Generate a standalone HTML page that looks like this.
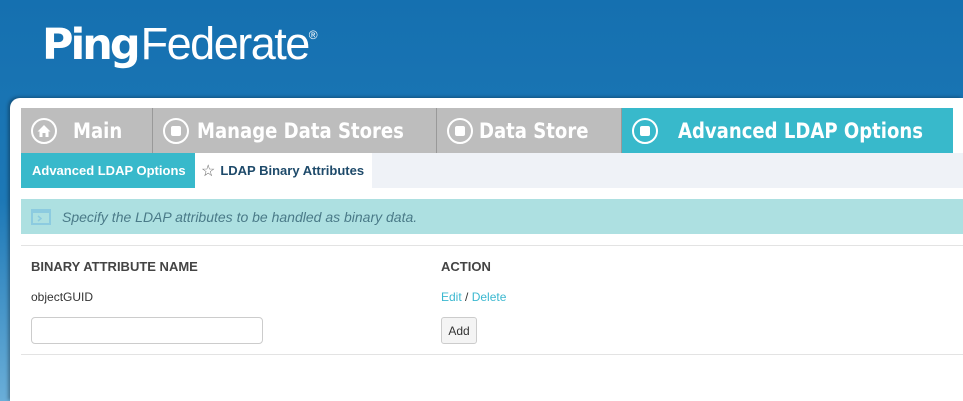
<!DOCTYPE html>
<html><head><meta charset="utf-8"><style>
*{margin:0;padding:0;box-sizing:border-box}
body{width:963px;height:401px;overflow:hidden;background:linear-gradient(180deg,#1570b0 0%,#1d78b6 50%,#6aaed8 100%);font-family:"Liberation Sans",sans-serif;position:relative}
.logo{position:absolute;left:42px;top:18px;color:#fff;font-size:44px;white-space:nowrap}
.logo b{font-family:"DejaVu Sans",sans-serif;font-weight:bold;letter-spacing:-3px;font-size:43px}
.logo span{font-weight:normal;font-family:"Liberation Sans",sans-serif;font-size:45px;letter-spacing:-1.5px;margin-left:3px}
.logo sup{font-size:12px;vertical-align:top;position:relative;top:10px}
.panel{position:absolute;left:10px;top:98px;right:0;bottom:0;background:#fff;border-top-left-radius:10px;box-shadow:-2px -1px 3px rgba(0,0,0,.3)}
.tab{position:absolute;top:108px;height:45px;background:#bdbdbd;color:#fff;font-family:"DejaVu Sans",sans-serif;font-weight:bold;font-size:21px;display:flex;align-items:center;border-right:1px solid #999;white-space:nowrap;overflow:hidden}
.tab .t{display:inline-block;transform:scaleX(0.86);transform-origin:left center}
.tab .ic{flex:none;width:26px;height:26px;border:2.5px solid #fff;border-radius:50%;margin:0 8px 0 10px;display:flex;align-items:center;justify-content:center}
.tab .ic i{width:10px;height:10px;background:#fff;border-radius:2px}
.sub{position:absolute;top:153px;height:35px;font-size:13px;font-weight:bold;display:flex;align-items:center}
.hd{position:absolute;font-size:13px;font-weight:bold;color:#444;top:259px}
</style></head><body>
<div class="logo"><b>Ping</b><span>Federate</span><sup>®</sup></div>
<div class="panel"></div>
<div class="tab" style="left:21px;width:132px"><div class="ic"><svg width="14" height="14" viewBox="0 0 14 14"><path d="M7 1L0.5 7.5H2.5V13H5.5V9H8.5V13H11.5V7.5H13.5Z" fill="#fff"/></svg></div><span class="t" style="margin-left:8px">Main</span></div>
<div class="tab" style="left:153px;width:284px"><div class="ic"><i></i></div><span class="t">Manage Data Stores</span></div>
<div class="tab" style="left:437px;width:185px"><div class="ic" style="margin-right:6px"><i></i></div><span class="t">Data Store</span></div>
<div class="tab" style="left:622px;width:331px;background:#38b9cb;border:none"><div class="ic" style="margin-right:20px"><i></i></div><span class="t">Advanced LDAP Options</span></div>
<div class="sub" style="left:21px;width:174px;background:#38b9cb;color:#fff;padding-left:11px">Advanced LDAP Options</div>
<div class="sub" style="left:195px;width:177px;background:#fff;color:#1e4a6a;padding-left:6px"><span style="color:#666;font-size:16px;font-weight:normal;margin-right:5px">☆</span>LDAP Binary Attributes</div>
<div class="sub" style="left:372px;right:0;background:#eff2f7"></div>
<div style="position:absolute;left:21px;right:0;top:199px;height:35px;background:#ade0e1;display:flex;align-items:center;color:#4a7a88;font-style:italic;font-size:14px">
<svg style="margin:0 11px 0 10px" width="20" height="16" viewBox="0 0 20 16"><rect x="1" y="1" width="18" height="14" fill="none" stroke="#8ccbe0" stroke-width="2"/><rect x="1" y="1" width="18" height="3" fill="#8ccbe0"/><path d="M7 7L10 9.5L7 12" fill="none" stroke="#8ccbe0" stroke-width="1.5"/></svg>Specify the LDAP attributes to be handled as binary data.</div>
<div style="position:absolute;left:21px;right:0;top:245px;border-top:1px solid #e3e3e3"></div>
<div class="hd" style="left:31px">BINARY ATTRIBUTE NAME</div>
<div class="hd" style="left:441px">ACTION</div>
<div style="position:absolute;left:31px;top:290px;font-size:12px;color:#333">objectGUID</div>
<div style="position:absolute;left:441px;top:290px;font-size:12px;color:#333"><span style="color:#3bb8d0">Edit</span> / <span style="color:#3bb8d0">Delete</span></div>
<div style="position:absolute;left:31px;top:317px;width:232px;height:27px;border:1px solid #ccc;border-radius:4px"></div>
<div style="position:absolute;left:441px;top:317px;width:36px;height:27px;border:1px solid #ccc;border-radius:3px;background:#f4f4f4;font-size:12px;color:#333;display:flex;align-items:center;justify-content:center">Add</div>
<div style="position:absolute;left:21px;right:0;top:354px;border-top:1px solid #e3e3e3"></div>
</body></html>
